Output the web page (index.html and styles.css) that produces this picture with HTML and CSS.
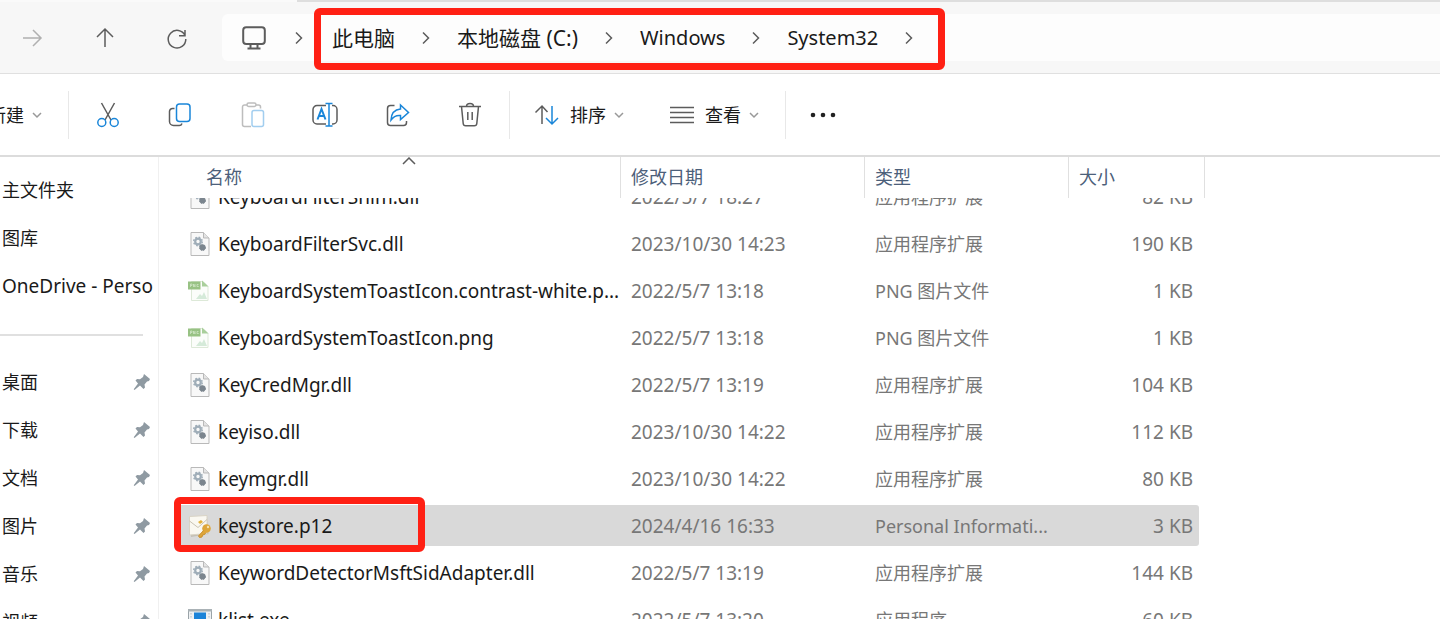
FILE: index.html
```html
<!DOCTYPE html>
<html lang="zh-CN">
  <head>
    <meta charset="UTF-8" />
    <meta name="viewport" content="width=device-width, initial-scale=1.0" />
    <title>System32</title>
    <link rel="stylesheet" href="styles.css">
  </head>
  <body>
    <!-- shared icons -->
    <svg class="sprite" aria-hidden="true">
      <symbol id="chevron-right" viewBox="0 0 12 16"><path d="M3 2.500 8.500 8 3 13.500" /></symbol>
      <symbol id="chevron-down" viewBox="0 0 10 10"><path d="M1 3l4 4 4-4" /></symbol>
      <symbol id="pin" viewBox="0 0 18 18"><path d="M11 1l6 5-1 2-2 .5-2.500 3 .5 3-1.500 1.500L7 12.500 1.500 17l-.8-.7L5 10.500 2.500 7.500 4 6l3 .2L10 4z" /></symbol>
      <symbol id="dll" viewBox="0 0 24 26">
        <path d="M3 1.500h12.500L21 7v17.500H3z" fill="#f8f8f8" stroke="#b9b9b9" />
        <path d="M15.500 1.500V7H21" fill="#e4e4e4" stroke="#b9b9b9" />
        <circle cx="10" cy="10.500" r="2.800" fill="none" stroke="#9fadb8" stroke-width="2.200" />
        <circle cx="10" cy="10.500" r="4.300" fill="none" stroke="#9fadb8" stroke-width="1.400" stroke-dasharray="1.700 1.700" />
        <circle cx="14.500" cy="16.500" r="3" fill="#7b858e" />
        <circle cx="14.500" cy="16.500" r="3" fill="none" stroke="#7b858e" stroke-dasharray="1.500 1" />
      </symbol>
      <symbol id="png" viewBox="0 0 24 26">
        <path d="M3.500 3.500H15l5 5v14H3.500z" fill="#fbfdfa" stroke="#dde9d8" />
        <path d="M14 2.500l6.500 6H14z" fill="#a9cf9b" />
        <path d="M8 21l4-5 2 2 2-4 3 7z" fill="#d5ead9" />
        <path d="M0 3.500h12.500v8H0z" fill="#98c284" />
        <path d="M2.500 6v3M2.500 6h1.500v1.500H2.500M5.500 9V6L7 9V6M10.500 6.500H9v2h1.500V8" fill="none" stroke="#cfe5c5" stroke-width=".8" />
      </symbol>
    </svg>

    <main class="explorer">
      <div class="tab-strip"><span class="tab"></span></div>
      <header class="nav-bar">
        <nav class="history">
          <button class="nav-button" aria-label="前进" disabled><svg viewBox="0 0 24 24"><path d="M3 12h18M13 4l8 8-8 8" /></svg></button>
          <button class="nav-button" aria-label="向上"><svg viewBox="0 0 24 24"><path d="M12 21V3M4 11l8-8 8 8" /></svg></button>
          <button class="nav-button" aria-label="刷新"><svg viewBox="0 0 24 24"><path d="M20 9.500A8.800 8.800 0 1 0 20.800 13M20 4v5.800h-6" /></svg></button>
        </nav>
        <div class="address">
          <svg class="pc" viewBox="0 0 24 24"><rect x="1.200" y="1.200" width="21.600" height="16.800" rx="3" /><path d="M8.500 18v4M15.500 18v4M5.500 22.500h13" /></svg>
          <svg class="chevron"><use href="#chevron-right" /></svg>
          <div class="path">
            <a class="cjk" href="#">此电脑</a>
            <svg class="chevron"><use href="#chevron-right" /></svg>
            <a class="cjk" href="#">本地磁盘 (C:)</a>
            <svg class="chevron"><use href="#chevron-right" /></svg>
            <a href="#">Windows</a>
            <svg class="chevron"><use href="#chevron-right" /></svg>
            <a href="#">System32</a>
            <svg class="chevron"><use href="#chevron-right" /></svg>
            <span class="mark"></span>
          </div>
        </div>
      </header>

      <div class="toolbar">
        <button class="menu new">新建<svg class="down"><use href="#chevron-down" /></svg></button>
        <div class="actions">
          <button aria-label="剪切"><svg viewBox="0 0 26 26"><path d="M6.500 1l9.500 17M19.500 1L10 18" /><g class="blue"><circle cx="6.800" cy="20.500" r="4" /><circle cx="19.200" cy="20.500" r="4" /></g></svg></button>
          <button aria-label="复制"><svg viewBox="0 0 26 26"><path d="M7.500 6.500H5.500a3 3 0 0 0-3 3v10a4 4 0 0 0 4 4h5.500a3 3 0 0 0 3-2" /><rect class="blue" x="9.500" y="2" width="13.500" height="17.500" rx="3" /></svg></button>
          <button aria-label="粘贴" disabled><svg viewBox="0 0 26 26"><path d="M11 24.500H4.500a2 2 0 0 1-2-2V5a2 2 0 0 1 2-2H7M16 3h2.500a2 2 0 0 1 2 2v1.500" /><rect x="7" y="1" width="9" height="3.500" rx="1.700" /><rect class="blue" x="12" y="8.500" width="11.500" height="16" rx="2" /></svg></button>
          <button aria-label="重命名"><svg viewBox="0 0 26 26"><path d="M14 3.500H5a4 4 0 0 0-4 4V18a4 4 0 0 0 4 4h9M20 3.500h1a4 4 0 0 1 4 4V18a4 4 0 0 1-4 4h-1" /><path class="blue" d="M17 1.500v22.500M13.500 1.500h7M13.500 24h7" /><path class="blue letter" d="M5.500 17.500l4-10.500 4 10.500M7 14h5" /></svg></button>
          <button aria-label="共享"><svg viewBox="0 0 26 26"><path d="M9.500 3.500H5.500a3 3 0 0 0-3 3v14a3 3 0 0 0 3 3h13a3 3 0 0 0 3-3V19" /><path class="blue" d="M15.500 3l8 7.500-8 7v-4c-4-.5-7 1-9.500 4.500.3-6.500 4-10.500 9.500-11z" /></svg></button>
          <button aria-label="删除"><svg viewBox="0 0 26 26"><path d="M2 4.500h22M9.500 4.500c0-4 7-4 7 0M4.500 4.500l1.700 17a2.500 2.500 0 0 0 2.500 2.300h8.600a2.500 2.500 0 0 0 2.500-2.300L21.500 4.500M10.800 10v8M15.200 10v8" /></svg></button>
        </div>
        <div class="menus">
          <button class="menu"><svg class="glyph" viewBox="0 0 26 26"><path d="M8 22V4M1.500 10.500L8 4l5.500 6" /><path class="blue" d="M18 4v18M12 16l6 6 6-6" /></svg>排序<svg class="down"><use href="#chevron-down" /></svg></button>
          <button class="menu"><svg class="glyph" viewBox="0 0 26 26"><path d="M1 5.500h24M1 10.500h24M1 15.500h24M1 20.500h24" /></svg>查看<svg class="down"><use href="#chevron-down" /></svg></button>
        </div>
        <button class="more" aria-label="更多"><svg viewBox="0 0 26 26"><circle cx="3" cy="13" r="2.300" /><circle cx="13" cy="13" r="2.300" /><circle cx="23" cy="13" r="2.300" /></svg></button>
      </div>

      <div class="content">
        <aside class="sidebar">
          <a class="place" href="#">主文件夹</a>
          <a class="place" href="#">图库</a>
          <a class="place latin" href="#">OneDrive - Personal</a>
          <div class="divider"></div>
          <a class="place" href="#">桌面<svg class="pin"><use href="#pin" /></svg></a>
          <a class="place" href="#">下载<svg class="pin"><use href="#pin" /></svg></a>
          <a class="place" href="#">文档<svg class="pin"><use href="#pin" /></svg></a>
          <a class="place" href="#">图片<svg class="pin"><use href="#pin" /></svg></a>
          <a class="place" href="#">音乐<svg class="pin"><use href="#pin" /></svg></a>
          <a class="place" href="#">视频<svg class="pin"><use href="#pin" /></svg></a>
        </aside>

        <table class="files">
          <thead>
            <tr>
              <th>名称<svg class="sort" viewBox="0 0 14 8"><path d="M1 7l6-6 6 6" /></svg></th>
              <th>修改日期</th>
              <th>类型</th>
              <th>大小</th>
            </tr>
          </thead>
          <tbody>
            <tr><td><svg><use href="#dll" /></svg>KeyboardFilterShim.dll</td><td>2022/5/7 18:27</td><td class="type">应用程序扩展</td><td>82 KB</td></tr>
            <tr><td><svg><use href="#dll" /></svg>KeyboardFilterSvc.dll</td><td>2023/10/30 14:23</td><td class="type">应用程序扩展</td><td>190 KB</td></tr>
            <tr><td><svg><use href="#png" /></svg>KeyboardSystemToastIcon.contrast-white.p...</td><td>2022/5/7 13:18</td><td class="type">PNG 图片文件</td><td>1 KB</td></tr>
            <tr><td><svg><use href="#png" /></svg>KeyboardSystemToastIcon.png</td><td>2022/5/7 13:18</td><td class="type">PNG 图片文件</td><td>1 KB</td></tr>
            <tr><td><svg><use href="#dll" /></svg>KeyCredMgr.dll</td><td>2022/5/7 13:19</td><td class="type">应用程序扩展</td><td>104 KB</td></tr>
            <tr><td><svg><use href="#dll" /></svg>keyiso.dll</td><td>2023/10/30 14:22</td><td class="type">应用程序扩展</td><td>112 KB</td></tr>
            <tr><td><svg><use href="#dll" /></svg>keymgr.dll</td><td>2023/10/30 14:22</td><td class="type">应用程序扩展</td><td>80 KB</td></tr>
            <tr class="selected">
              <td>
                <svg viewBox="0 0 24 26">
                  <path d="M2 4.500l17-1.500 1.500 18L3 24z" fill="#c4bfb4" />
                  <path d="M1.500 3.500L19 2.500v18L1.500 22z" fill="#faf8f1" stroke="#d9d4c6" />
                  <path d="M1.500 8l8.500 6.500L19 6.500" fill="none" stroke="#c9c3b4" />
                  <path d="M10 9l3-2 2 2-3 2z" fill="#e3b23c" />
                  <circle cx="18.500" cy="15.500" r="4.300" fill="#dea63a" />
                  <circle cx="20" cy="14" r="1.200" fill="#f6e2ae" />
                  <path d="M15.500 17.500L10.500 23l1 1.500 2.500-.5.500-2 2-.5 1.500-2" fill="#dea63a" stroke="#c98f2d" />
                </svg>keystore.p12<span class="mark"></span>
              </td>
              <td>2024/4/16 16:33</td><td class="type">Personal Informati...</td><td>3 KB</td>
            </tr>
            <tr><td><svg><use href="#dll" /></svg>KeywordDetectorMsftSidAdapter.dll</td><td>2022/5/7 13:19</td><td class="type">应用程序扩展</td><td>144 KB</td></tr>
            <tr>
              <td>
                <svg viewBox="0 0 24 26">
                  <path d="M.5 2.500h23v20H.5z" fill="#eef1f3" stroke="#9aa3a8" />
                  <path d="M0 2h24v2.500H0z" fill="#aab2b6" />
                  <path d="M6 5.500h12v13H6z" fill="#1b83d8" />
                  <path d="M3 6v14M21 6v14" stroke="#b5bcc0" stroke-dasharray="1.500 1.500" />
                </svg>klist.exe
              </td>
              <td>2022/5/7 13:20</td><td class="type">应用程序</td><td>60 KB</td>
            </tr>
          </tbody>
        </table>
      </div>
    </main>
  </body>
</html>
```
FILE: styles.css
```css
* {
  box-sizing: border-box;
  margin: 0;
  padding: 0;
}
:root {
  --text: #1a1a1a;
  --muted: #777;
  --heading: #4c607a;
  --blue: #1a86d9;
  --line: #e0e0e0;
  --mark: #ff2014;
}
body {
  background: #fff;
  color: var(--text);
  font-family: "Noto Sans", "Noto Sans CJK SC", sans-serif;
  font-size: 18px;
  line-height: 24px;
}
button {
  display: flex;
  align-items: center;
  border: none;
  background: none;
  color: inherit;
  font: inherit;
  white-space: nowrap;
  cursor: pointer;
}
a {
  color: inherit;
  text-decoration: none;
}
svg {
  display: block;
  flex: none;
  fill: none;
  stroke: #5c5c5c;
  stroke-width: 1.5;
}
.sprite {
  position: absolute;
  width: 0;
  height: 0;
}
.blue {
  stroke: var(--blue);
}
.mark {
  position: absolute;
  border: 7px solid var(--mark);
  border-radius: 6px;
  pointer-events: none;
}
.explorer {
  display: flex;
  flex-direction: column;
  height: 100vh;
  overflow: hidden;
}

/* Navigation */
.tab-strip {
  flex: none;
  height: 2px;
  background: #fafafa;
}
.tab {
  display: block;
  height: 2px;
  margin-left: 297px;
  background: #dedede;
}
.nav-bar {
  flex: none;
  display: flex;
  height: 72px;
  padding: 12px 0;
  background: #f7f7f7;
  border-bottom: 1px solid var(--line);
}
.history {
  display: flex;
  justify-content: space-between;
  width: 222px;
  padding: 0 33px 0 20px;
}
.nav-button svg {
  width: 24px;
  height: 24px;
}
.nav-button:disabled svg {
  stroke: #b0b0b0;
}
.address {
  flex: 1;
  display: flex;
  align-items: center;
  padding-left: 20px;
  background: #fdfdfd;
  border-radius: 6px 0 0 6px;
}
.pc {
  width: 24px;
  height: 24px;
  stroke-width: 2;
}
.chevron {
  width: 12px;
  height: 16px;
  margin: 0 27px;
}
.path {
  position: relative;
  display: flex;
  align-items: center;
  font-size: 20px;
  white-space: nowrap;
}
.path .cjk {
  font-size: 21px;
}
.path .chevron {
  margin: 0 25px;
}
.path .mark {
  inset: -18px -5px -20px -18px;
}

/* Commands */
.toolbar {
  flex: none;
  display: flex;
  align-items: center;
  height: 83px;
  border-bottom: 2px solid #dcdcdc;
}
.menu {
  gap: 8px;
}
.down {
  width: 10px;
  height: 10px;
  stroke: #999;
}
.new {
  justify-content: flex-end;
  width: 68px;
  padding-right: 26px;
}
.actions,
.menus {
  display: flex;
  align-items: center;
  justify-content: space-between;
  height: 48px;
  padding: 0 26px;
  border-left: 1px solid #e8e8e8;
  border-right: 1px solid #e8e8e8;
}
.actions {
  width: 442px;
}
.actions svg,
.more svg,
.glyph {
  width: 26px;
  height: 26px;
}
.actions button:disabled svg {
  opacity: 0.4;
}
.letter {
  stroke-width: 2;
}
.menus {
  width: 276px;
  border-left: none;
  padding: 0 26px 0 24px;
}
.glyph {
  margin-right: 2px;
}
.more {
  padding: 0 24px;
}
.more svg {
  fill: #222;
  stroke: none;
}

/* Sidebar */
.content {
  flex: 1;
  display: flex;
  min-height: 0;
}
.sidebar {
  flex: none;
  width: 159px;
  padding: 9px 5px 0 2px;
  border-right: 1px solid #f0f0f0;
  overflow: hidden;
}
.place {
  display: flex;
  align-items: center;
  justify-content: space-between;
  height: 48px;
  overflow: hidden;
  white-space: nowrap;
}
.latin {
  font-size: 19px;
}
.divider {
  height: 26px;
  margin: 0 10px 22px -2px;
  border-bottom: 2px solid var(--line);
}
.pin {
  width: 18px;
  height: 18px;
  margin-right: 2px;
  fill: #8f9aa2;
  stroke: none;
}

/* File list */
.files,
.files tbody {
  display: block;
}
.files {
  padding-left: 17px;
  white-space: nowrap;
}
.files tr {
  display: grid;
  grid-template-columns: 445px 244px 204px 130px;
}
.files thead {
  position: relative;
  z-index: 1;
  display: block;
  background: #fff;
}
.files thead tr {
  grid-template-columns: 445px 244px 204px 136px;
}
.files th {
  position: relative;
  height: 41px;
  padding: 8px 0 0 10px;
  border-right: 1px solid var(--line);
  color: var(--heading);
  font-weight: normal;
  text-align: left;
}
.files th:first-child {
  padding-left: 30px;
}
.sort {
  position: absolute;
  top: 0;
  left: 226px;
  width: 14px;
  height: 8px;
}
.files tbody {
  margin-top: -22px;
}
.files tbody tr {
  height: 41px;
  margin: 0 6px 6px 0;
  border-radius: 3px;
}
.files td {
  display: flex;
  align-items: center;
  padding-left: 10px;
  color: var(--muted);
  font-size: 19px;
}
.files .type {
  font-size: 18px;
}
.files td:first-child {
  position: relative;
  gap: 6px;
  padding-left: 12px;
  color: var(--text);
}
.files td:last-child {
  justify-content: flex-end;
  padding-right: 6px;
}
.files td svg {
  width: 24px;
  height: 26px;
  stroke: none;
  stroke-width: 1;
}
.selected {
  background: #d9d9d9;
}
.selected .mark {
  inset: -8px 196px -6px -2px;
}
```
